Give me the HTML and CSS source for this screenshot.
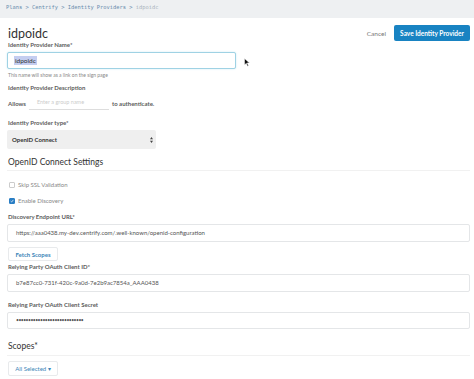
FILE: index.html
```html
<!DOCTYPE html>
<html>
<head>
<meta charset="utf-8">
<link rel="stylesheet" href="styles.css">
</head>
<body>
<div class="crumbs">Plans &gt; Centrify &gt; Identity Providers &gt; <span class="cur">idpoidc</span></div>
<div class="page">
  <div class="head">
    <h1 class="title">idpoidc</h1>
    <div class="actions">
      <span class="cancel">Cancel</span>
      <button class="btn-primary">Save Identity Provider</button>
    </div>
  </div>
  <div class="label first">Identity Provider Name*</div>
  <div class="input name-input"><span class="sel">idpoidc</span></div>
  <div class="help">This name will show as a link on the sign page</div>
  <div class="label desc-label">Identity Provider Description</div>
  <div class="allows"><span>Allows</span><span class="group">Enter a group name</span><span class="auth">to authenticate.</span></div>
  <div class="label type-label">Identity Provider type*</div>
  <div class="select"><span>OpenID Connect</span><svg class="arrows" viewBox="0 0 4 8" width="3" height="6"><path d="M2 0 L4 3 L0 3 Z M2 8 L4 5 L0 5 Z" fill="#444"/></svg></div>
  <div class="section">OpenID Connect Settings</div>
  <div class="check skip"><span class="box"></span>Skip SSL Validation</div>
  <div class="check enable"><span class="box on"><svg viewBox="0 0 8 8" width="6" height="6"><path d="M1.3 4.2 L3.2 6 L6.7 1.8" fill="none" stroke="#fff" stroke-width="1.4"/></svg></span>Enable Discovery</div>
  <div class="label disc-label">Discovery Endpoint URL*</div>
  <div class="input wide">https://aaa0438.my-dev.centrify.com/.well-known/openid-configuration</div>
  <button class="btn-light fetch">Fetch Scopes</button>
  <div class="label tight">Relying Party OAuth Client ID*</div>
  <div class="input wide">b7e87cc0-731f-420c-9a0d-7e2b9ac7854a_AAA0438</div>
  <div class="label secret-label">Relying Party OAuth Client Secret</div>
  <div class="input wide secret">••••••••••••••••••••••••••••</div>
  <div class="section scopes">Scopes*</div>
  <button class="btn-light all">All Selected ▾</button>
</div>
<svg class="cursor" viewBox="0 0 12 18" width="6" height="9"><path d="M1 1 L1 14 L4.5 10.5 L7 16.5 L9 15.5 L6.5 9.8 L11 9.8 Z" fill="#111" stroke="#fff" stroke-width="1"/></svg>
</body>
</html>
```
FILE: styles.css
```css
* { box-sizing: border-box; }
html, body { margin: 0; padding: 0; background: #fff; }
body { font-family: Lato, "Open Sans", sans-serif; color: #444; width: 474px; height: 379px; overflow: hidden; position: relative; }
.crumbs {
  height: 18px; background: #eef0f2; color: #6a8cad;
  font-family: "DejaVu Sans Mono", monospace; font-size: 5.4px; line-height: 7px;
  padding: 4px 0 0 6px;
}
.crumbs .cur { color: #aab5c0; }
.page { padding: 0 4px 0 7px; }
.head { display: flex; justify-content: space-between; align-items: flex-start; padding-top: 7px; height: 22px; }
.title { margin: 0; font-weight: 400; font-size: 12.5px; color: #333; line-height: 15px; padding-left: 1px; padding-top: 1px; }
.actions { display: flex; align-items: center; gap: 8px; }
.cancel { font-size: 6.5px; color: #777; }
.btn-primary {
  background: #1883c2; color: #fff; border: 0; border-radius: 2px;
  font-family: Lato, sans-serif; font-weight: 700; font-size: 6.5px;
  height: 16px; width: 76px; padding: 0;
}
.label { font-size: 6px; font-weight: 700; color: #5c5c5c; line-height: 9px; height: 9px; padding-left: 1px; white-space: nowrap; }
.label.first { margin-top: 0; }
.input {
  border: 1px solid #e4e6e8; border-radius: 2px; height: 18px; margin-top: 3px;
  font-size: 6px; color: #555; padding: 0 8px; line-height: 16px; background: #fff;
}
.name-input { width: 229px; height: 17px; border-color: #9fd2e4; box-shadow: 0 0 2px #c9e8f2; padding: 0 6px; line-height: 15px; }
.sel { background: #c4cdf0; color: #333; padding: 1px 1px; font-size: 6.5px; }
.help { font-size: 5px; color: #888; margin-top: 3px; line-height: 6px; height: 6px; padding-left: 1px; }
.desc-label { margin-top: 5px; }
.allows { display: flex; align-items: center; height: 14px; font-size: 6px; font-weight: 700; color: #5c5c5c; margin-top: 4px; padding-left: 1px; }
.group { width: 80px; height: 14px; line-height: 13px; border-bottom: 1px solid #ddd; color: #ccc; font-weight: 400; padding: 0 8px; margin: 0 3px; font-size: 5.5px; }
.type-label { margin-top: 8px; }
.select {
  width: 149px; height: 19px; background: #efefef; border-radius: 2px; margin-top: 3px;
  display: flex; justify-content: space-between; align-items: center;
  font-size: 6px; font-weight: 700; color: #333; padding: 0 3px 0 5px;
}
.section { font-size: 8.5px; color: #333; margin-top: 8px; line-height: 11px; padding-left: 1px; padding-bottom: 2px; border-bottom: 1px solid #f1f1f1; }
.check { display: flex; align-items: center; gap: 3px; font-size: 6px; color: #888; height: 7px; padding-left: 2px; }
.skip { margin-top: 10px; }
.enable { margin-top: 9px; }
.box { width: 6px; height: 6px; border: 1px solid #ccc; border-radius: 1px; display: flex; align-items: center; justify-content: center; }
.box.on { background: #2a7ec4; border-color: #2a7ec4; }
.disc-label { margin-top: 8px; }
.wide { width: 463px; }
.btn-light {
  display: block; background: #fff; border: 1px solid #e8eaec; border-radius: 2px;
  color: #3d86b8; font-family: Lato, sans-serif; font-weight: 700; font-size: 6px;
  height: 14px; padding: 0; margin-left: 1px; white-space: nowrap;
}
.fetch { margin-top: 5px; width: 50px; }
.tight { margin-top: 1px; }
.secret-label { margin-top: 8px; }
.secret { font-size: 5px; letter-spacing: -0.5px; height: 17px; line-height: 15px; }
.scopes { margin-top: 12px; padding-bottom: 3px; }
.all { margin-top: 5px; width: 50px; height: 15px; font-weight: 400; }
.cursor { position: absolute; left: 244px; top: 58px; }
```
